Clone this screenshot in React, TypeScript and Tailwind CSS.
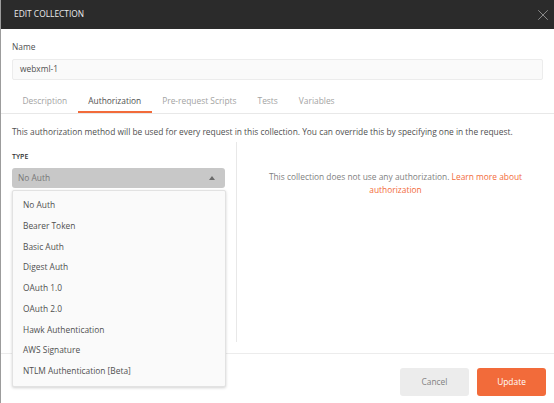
import { X } from "lucide-react";

const authTypes = [
  "No Auth",
  "Bearer Token",
  "Basic Auth",
  "Digest Auth",
  "OAuth 1.0",
  "OAuth 2.0",
  "Hawk Authentication",
  "AWS Signature",
  "NTLM Authentication [Beta]",
];

const tabs = ["Description", "Authorization", "Pre-request Scripts", "Tests", "Variables"];

export default function App() {
  return (
    <div className="relative flex h-[403px] w-[554px] flex-col overflow-hidden border-l border-[#9c9c9c] bg-white font-['Open_Sans',sans-serif] text-[8.4px] text-[#505050]">
      {/* header */}
      <div className="flex h-[29px] shrink-0 items-center justify-between bg-[#2b2b2b] pl-[13px] pr-[2px]">
        <span className="text-[8.4px] text-[#ececec]">EDIT COLLECTION</span>
        <X className="h-[18px] w-[18px] text-[#8c8c8c]" strokeWidth={1.3} />
      </div>

      {/* name + tabs */}
      <div className="border-b border-[#e8e8e8]">
        <div className="px-[11px] pt-[10px]">
          <div className="leading-[15px]">Name</div>
          <div className="mt-[5px] flex h-[21px] items-center rounded-[2px] border border-[#ececec] bg-[#fafafa] pl-[7px]">
            webxml-1
          </div>
        </div>
        <div className="flex px-[11px]">
          {tabs.map((t) => (
            <div
              key={t}
              className={
                t === "Authorization"
                  ? "border-b-2 border-[#f26b3a] px-[10.5px] pt-[13px] pb-[3px] leading-[15px] text-[#505050]"
                  : "border-b-2 border-transparent px-[10.5px] pt-[13px] pb-[3px] leading-[15px] text-[#a3a3a3]"
              }
            >
              {t}
            </div>
          ))}
        </div>
      </div>

      <div className="px-[11px] pt-[10px] leading-[15px]">
        This authorization method will be used for every request in this collection. You can override this by specifying one in the request.
      </div>

      {/* auth body */}
      <div className="mt-[3px] flex h-[200px] shrink-0">
        <div className="relative w-[235px] shrink-0 px-[11px] pt-[10px]">
          <div className="text-[7px] font-semibold leading-[10px] text-[#333333]">TYPE</div>
          <div className="mt-[6px] flex h-[20px] items-center justify-between rounded-[3px] bg-[#c8c8c8] pl-[6px] pr-[10px] text-[#777777]">
            <span>No Auth</span>
            <svg width="6" height="4" viewBox="0 0 6 4">
              <path d="M0 4 L3 0 L6 4 Z" fill="#6a6a6a" />
            </svg>
          </div>
          <div className="absolute left-[11px] top-[48px] z-10 w-[214px] rounded-[2px] border border-[#e2e2e2] bg-[#fafafa] py-[4px] shadow-[0_1px_3px_rgba(0,0,0,0.18)]">
            {authTypes.map((a) => (
              <div key={a} className="flex h-[20.75px] items-center pl-[10px]">
                {a}
              </div>
            ))}
          </div>
        </div>
        <div className="flex-1 border-l border-[#e8e8e8] px-[20px] pt-[28px] text-center leading-[13px] text-[#7f7f7f]">
          This collection does not use any authorization.{" "}
          <span className="text-[#f26b3a]">Learn more about authorization</span>
        </div>
      </div>

      {/* footer */}
      <div className="mt-[11px] flex flex-1 items-start justify-end gap-[8px] border-t border-[#ececec] pr-[8px] pt-[14px]">
        <button className="h-[28px] w-[69px] rounded-[3px] bg-[#ececec] text-[8.4px] text-[#808080]">Cancel</button>
        <button className="h-[28px] w-[69px] rounded-[3px] bg-[#f26b3a] text-[8.4px] text-white">Update</button>
      </div>
    </div>
  );
}
